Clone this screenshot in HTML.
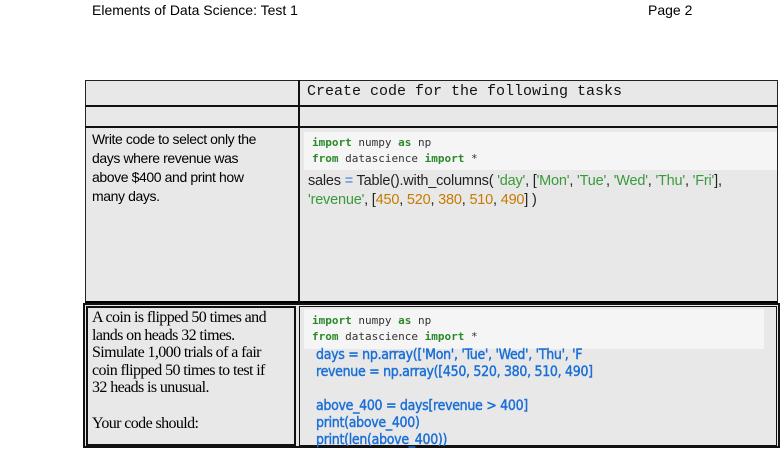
<!DOCTYPE html>
<html><head><meta charset="utf-8"><style>
*{margin:0;padding:0;box-sizing:border-box}
body{width:784px;height:441px;background:#fff;position:relative;overflow:hidden;font-family:"Liberation Sans",sans-serif;color:#000}
.a{position:absolute;white-space:nowrap}
.mono{font-family:"DejaVu Sans Mono","Liberation Mono",monospace}
.kw{color:#2a8a2a;font-weight:bold}
.g{color:#3a9a3a}.o{color:#c77a00}.b{color:#3b7dd8}
.blue{color:#1a6fd8;font-family:"DejaVu Sans Condensed","Liberation Sans Narrow","Liberation Sans",sans-serif;letter-spacing:-0.3px;-webkit-text-stroke:0.4px #1a6fd8}
</style></head><body>
<div class="a" style="left:92px;top:2px;font-size:14px">Elements of Data Science: Test 1</div>
<div class="a" style="left:648px;top:2px;font-size:14px">Page 2</div>

<div class="a" style="left:85px;top:80px;width:693px;height:223px;background:#e8e8e8;border:1.5px solid #222;border-bottom:2px solid #000"></div>
<div class="a" style="left:298px;top:80px;width:2px;height:223px;background:#111"></div>
<div class="a" style="left:85px;top:105px;width:693px;height:2px;background:#111"></div>
<div class="a" style="left:85px;top:126px;width:693px;height:2px;background:#111"></div>
<div class="a" style="left:307px;top:83px;font-size:15px;color:#111;font-family:'Liberation Mono',monospace">Create code for the following tasks</div>
<div class="a" style="left:92px;top:130px;font-size:14px;line-height:19px;letter-spacing:-0.4px">Write code to select only the<br>days where revenue was<br>above $400 and print how<br>many days.</div>
<div class="a" style="left:304px;top:132px;width:473px;height:38px;background:#f5f5f5"></div>
<div class="a mono" style="left:312px;top:135px;font-size:11px;line-height:16px;color:#333"><span class="kw">import</span> numpy <span class="kw">as</span> np<br><span class="kw">from</span> datascience <span class="kw">import</span> *</div>
<div class="a" style="left:308px;top:172px;font-size:14.5px;line-height:19px;letter-spacing:-0.2px;color:#222">sales <span class="b">=</span> Table().with_columns( <span class="g">'day'</span>, [<span class="g">'Mon'</span>, <span class="g">'Tue'</span>, <span class="g">'Wed'</span>, <span class="g">'Thu'</span>, <span class="g">'Fri'</span>],<br><span class="g">'revenue'</span>, [<span class="o">450</span>, <span class="o">520</span>, <span class="o">380</span>, <span class="o">510</span>, <span class="o">490</span>] )</div>

<div class="a" style="left:83px;top:303px;width:697px;height:145px;background:#e8e8e8;border:2px solid #111"></div>
<div class="a" style="left:86px;top:306px;width:210px;height:140px;border:2px solid #111"></div>
<div class="a" style="left:299px;top:306px;width:478px;height:140px;border:1.5px solid #111"></div>
<div class="a" style="left:92px;top:309px;font-family:'Liberation Serif',serif;font-size:16px;line-height:17.6px;letter-spacing:-0.6px">A coin is flipped 50 times and<br>lands on heads 32 times.<br>Simulate 1,000 trials of a fair<br>coin flipped 50 times to test if<br>32 heads is unusual.<br><br>Your code should:</div>
<div class="a" style="left:304px;top:309px;width:460px;height:40px;background:#f5f5f5"></div>
<div class="a mono" style="left:312px;top:313px;font-size:11px;line-height:16px;color:#333"><span class="kw">import</span> numpy <span class="kw">as</span> np<br><span class="kw">from</span> datascience <span class="kw">import</span> *</div>
<div class="a blue" style="left:316px;top:347px;font-size:14px;line-height:17px">days = np.array(['Mon', 'Tue', 'Wed', 'Thu', 'F<br>revenue = np.array([450, 520, 380, 510, 490]<br><br>above_400 = days[revenue &gt; 400]<br>print(above_400)<br>print(len(above_400))</div>
</body></html>
